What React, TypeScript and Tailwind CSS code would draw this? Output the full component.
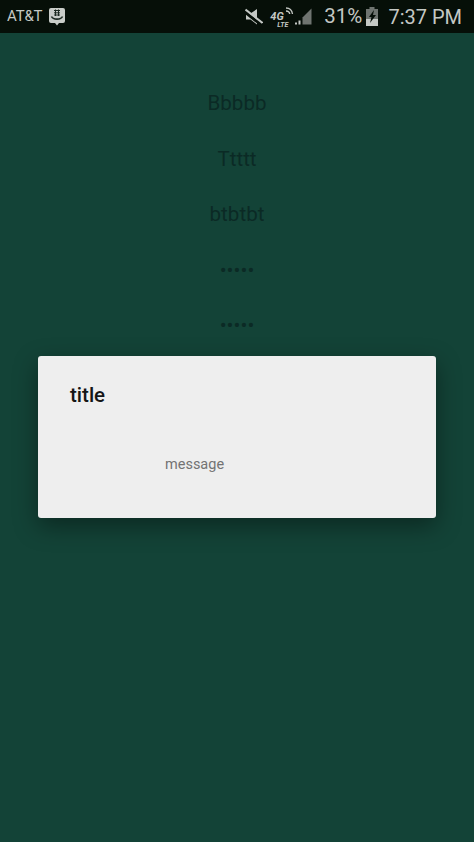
const rows = ['Bbbbb', 'Ttttt', 'btbtbt', '•••••', '•••••'];

function FaceBubble() {
  return (
    <svg width="18" height="20" viewBox="0 0 18 20">
      <path d="M3 1h12a2 2 0 0 1 2 2v11a2 2 0 0 1-2 2h-4l-2 2.500L7 16H3a2 2 0 0 1-2-2V3a2 2 0 0 1 2-2z" fill="#c9cdc9" />
      <path d="M6 3.500h6M6 5.800h6M6 8h6M7.500 2.500v6.500M10.500 2.500v6.500" stroke="#1d2a22" strokeWidth="1" fill="none" />
      <path d="M3.500 9.500c1.500 3.500 9.500 3.500 11 0" stroke="#1d2a22" strokeWidth="1.600" fill="none" />
    </svg>
  );
}

function MuteIcon() {
  return (
    <svg width="18" height="18" viewBox="0 0 18 18">
      <path d="M1 5.500h4.500L12 1v15.500L5.500 11.500H1z" fill="#c4c8c4" />
      <path d="M0 4L17 17.500" stroke="#060f08" strokeWidth="3" />
      <path d="M0.500 1.500L17.500 15" stroke="#c4c8c4" strokeWidth="2" />
    </svg>
  );
}

function NetworkIcon() {
  return (
    <div className="relative h-[24px] w-[24px]">
      <span className="absolute left-0 top-[8px] text-[11px] font-bold italic leading-[8px] text-[#c4c8c4]">4G</span>
      <span className="absolute left-[7px] top-[17px] text-[7px] font-bold italic leading-[6px] text-[#c4c8c4]">LTE</span>
      <svg className="absolute left-[14px] top-[2px]" width="10" height="10" viewBox="0 0 10 10">
        <path d="M2 1c3.500 0 6 2.500 6.500 6M2 4c2 0 3.500 1.200 3.800 3" stroke="#c4c8c4" strokeWidth="1.300" fill="none" />
      </svg>
    </div>
  );
}

function SignalIcon() {
  return (
    <svg width="18" height="18" viewBox="0 0 18 18">
      <path d="M17.500 0.500v16H8.500v-7z" fill="#6f7470" />
      <path d="M1 14.500h2v2H1zM4.500 12.500h2v4h-2z" fill="#c4c8c4" />
    </svg>
  );
}

function BatteryIcon() {
  return (
    <svg width="12" height="19" viewBox="0 0 12 19">
      <path d="M3.500 0h5v2H12v17H0V2h3.500z" fill="#6f7470" />
      <path d="M0 12h12v7H0z" fill="#c4c8c4" />
      <path d="M8 3L3 10h2.500L4 16l6-8H7z" fill="#060f08" />
    </svg>
  );
}

export default function App() {
  return (
    <div className="relative h-[842px] w-[474px] overflow-hidden bg-[#134337] font-['Roboto',sans-serif]">
      {/* status bar */}
      <div className="flex h-[33px] items-center justify-between bg-[#060f08] pl-[7px] pr-[12px] text-[#c4c8c4]">
        <div className="flex items-center gap-[6px]">
          <span className="text-[15px] tracking-[-0.2px]">AT&amp;T</span>
          <FaceBubble />
        </div>
        <div className="flex items-center">
          <MuteIcon />
          <div className="ml-[7px]"><NetworkIcon /></div>
          <div className="ml-0"><SignalIcon /></div>
          <span className="ml-[12px] text-[20.500px]">31%</span>
          <div className="ml-[4px]"><BatteryIcon /></div>
          <span className="ml-[10px] text-[20px]">7:37 PM</span>
        </div>
      </div>

      {/* list behind the dialog */}
      <div className="flex flex-col pt-[43px]">
        {rows.map((row, i) => (
          <div key={i} className="flex h-[55.500px] items-center justify-center text-[20.600px] text-[#0b2a25]">
            {row}
          </div>
        ))}
      </div>

      {/* dialog */}
      <div className="absolute left-[38px] top-[356px] h-[162px] w-[398px] rounded-[3px] bg-[#eeeeee] shadow-[0_8px_24px_rgba(0,0,0,0.4)]">
        <div className="pl-[32px] pt-[25px] text-[20.500px] font-medium leading-[28px] text-[#151515]">title</div>
        <div className="pl-[127px] pt-[46px] text-[14.500px] leading-[20px] text-[#737373]">message</div>
      </div>
    </div>
  );
}
